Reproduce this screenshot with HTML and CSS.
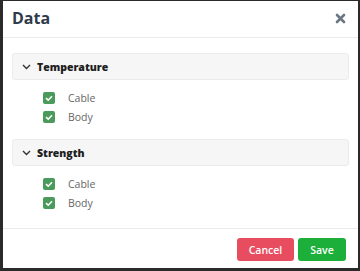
FILE: index.html
```html
<!DOCTYPE html>
<html>
<head>
<meta charset="utf-8">
<link rel="stylesheet" href="styles.css">
</head>
<body>
<div class="frame">
  <div class="header">
    <div class="title">Data</div>
    <div class="close">
      <svg width="11" height="11" viewBox="0 0 11 11"><path d="M2 2 L9 9 M9 2 L2 9" stroke="#6b7785" stroke-width="2.6" stroke-linecap="round"/></svg>
    </div>
  </div>
  <div class="content">
    <div class="panel">
      <svg class="chev" width="9" height="6" viewBox="0 0 9 6"><path d="M1 1 L4.5 4.5 L8 1" fill="none" stroke="#333" stroke-width="1.4"/></svg>
      <span>Temperature</span>
    </div>
    <div class="list">
      <div class="row"><span class="cb"><svg width="12" height="12" viewBox="0 0 12 12"><path d="M3 6.2 L5.2 8.2 L9 4.2" fill="none" stroke="#fff" stroke-width="1.6"/></svg></span><span class="lbl">Cable</span></div>
      <div class="row"><span class="cb"><svg width="12" height="12" viewBox="0 0 12 12"><path d="M3 6.2 L5.2 8.2 L9 4.2" fill="none" stroke="#fff" stroke-width="1.6"/></svg></span><span class="lbl">Body</span></div>
    </div>
    <div class="panel second">
      <svg class="chev" width="9" height="6" viewBox="0 0 9 6"><path d="M1 1 L4.5 4.5 L8 1" fill="none" stroke="#333" stroke-width="1.4"/></svg>
      <span>Strength</span>
    </div>
    <div class="list">
      <div class="row"><span class="cb"><svg width="12" height="12" viewBox="0 0 12 12"><path d="M3 6.2 L5.2 8.2 L9 4.2" fill="none" stroke="#fff" stroke-width="1.6"/></svg></span><span class="lbl">Cable</span></div>
      <div class="row"><span class="cb"><svg width="12" height="12" viewBox="0 0 12 12"><path d="M3 6.2 L5.2 8.2 L9 4.2" fill="none" stroke="#fff" stroke-width="1.6"/></svg></span><span class="lbl">Body</span></div>
    </div>
  </div>
  <div class="footer">
    <button class="btn cancel">Cancel</button>
    <button class="btn save">Save</button>
  </div>
</div>
</body>
</html>
```
FILE: styles.css
```css
html, body {
  margin: 0;
  padding: 0;
  background: #fff;
}
.frame {
  width: 360px;
  height: 271px;
  box-sizing: border-box;
  border-style: solid;
  border-color: #2a2a2a;
  border-width: 1px 2px 3px 3px;
  display: flex;
  flex-direction: column;
  font-family: "Open Sans", "Noto Sans", sans-serif;
  background: #fff;
}
.header {
  height: 37px;
  box-sizing: border-box;
  display: flex;
  align-items: center;
  justify-content: space-between;
  padding: 0 12px 2px 9px;
  border-bottom: 1px solid #ebebeb;
}
.title {
  font-size: 16px;
  font-weight: 700;
  color: #2f3a4a;
}
.close {
  display: flex;
  align-items: center;
}
.content {
  flex: 1;
  padding: 15px 9px 0 9px;
}
.panel {
  height: 27px;
  box-sizing: border-box;
  background: #f6f6f6;
  border: 1px solid #ebebeb;
  border-radius: 3px;
  display: flex;
  align-items: center;
  padding-left: 9px;
  font-size: 10.5px;
  font-weight: 800;
  color: #1e1e1e;
}
.panel.second {
  margin-top: 13px;
}
.chev {
  margin-right: 6px;
}
.list {
  padding-left: 31px;
  margin-top: 8px;
}
.row {
  height: 19px;
  display: flex;
  align-items: center;
}
.cb {
  width: 12px;
  height: 12px;
  background: #4a9b5b;
  border-radius: 2px;
  display: flex;
}
.lbl {
  margin-left: 13px;
  font-size: 10.5px;
  color: #666;
}
.footer {
  height: 40px;
  box-sizing: border-box;
  border-top: 1px solid #ebebeb;
  display: flex;
  justify-content: flex-end;
  align-items: flex-start;
  padding: 9px 12px 0 0;
  gap: 4px;
}
.btn {
  height: 23px;
  border: none;
  border-radius: 3px;
  color: #fff;
  font-family: "Open Sans", "Noto Sans", sans-serif;
  font-size: 10.5px;
  font-weight: 600;
  padding: 0;
}
.cancel {
  width: 57px;
  background: #e84d5f;
}
.save {
  width: 48px;
  background: #1caf39;
}
```
